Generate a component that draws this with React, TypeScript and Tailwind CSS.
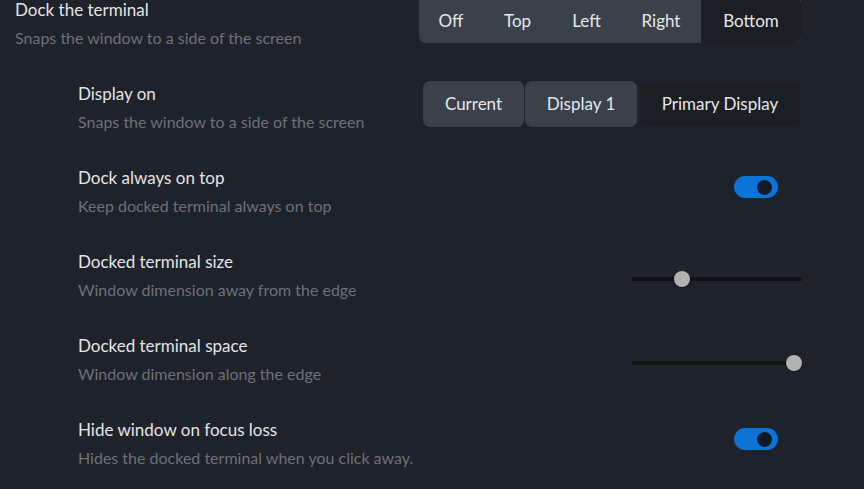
import React from "react"

const font = { fontFamily: "Lato, 'Noto Sans', sans-serif" }

function RowText({ title, desc }: { title: string; desc: string }) {
  return (
    <div className="flex flex-col">
      <div className="text-[17px] leading-6 text-[#e3e4e6]">{title}</div>
      <div className="mt-1 text-[16px] leading-6 text-[#6c7179]">{desc}</div>
    </div>
  )
}

function Toggle() {
  return (
    <div className="flex h-[22px] w-[44px] items-center justify-end rounded-full bg-[#0b74d6] pr-[6px]">
      <div className="h-[15px] w-[15px] rounded-full bg-[#0f1a26]" />
    </div>
  )
}

function Slider({ value }: { value: number }) {
  return (
    <div className="relative h-4 w-[170px]">
      <div className="absolute left-0 right-0 top-[6px] h-[4px] bg-[#131313]" />
      <div
        className="absolute top-0 h-4 w-4 rounded-full bg-[#b2b2b2] shadow-[0_1px_2px_rgba(0,0,0,0.5)]"
        style={{ left: `calc(${value}% - ${(value / 100) * 16}px)` }}
      />
    </div>
  )
}

export default function App() {
  const dock = [
    { label: "Off", w: "w-[64px]" },
    { label: "Top", w: "w-[69px]" },
    { label: "Left", w: "w-[69px]" },
    { label: "Right", w: "w-[80px]" },
  ]

  return (
    <div className="h-[489px] w-[864px] overflow-hidden bg-[#1e222a]" style={font}>
      <div className="-mt-[2px] flex flex-col">
        {/* Dock the terminal */}
        <div className="flex h-[84px] items-start justify-between pl-[15px] pr-[63px]">
          <RowText title="Dock the terminal" desc="Snaps the window to a side of the screen" />
          <div className="-mt-[1px] flex h-[46px] overflow-hidden rounded-b-[7px] bg-[#3a414a]">
            {dock.map((d) => (
              <div key={d.label} className={`${d.w} flex items-center justify-center pt-[1px] text-[17px] text-[#e6e7e9]`}>
                {d.label}
              </div>
            ))}
            <div className="flex w-[100px] items-center justify-center rounded-r-[7px] bg-[#1b1e22] pt-[1px] text-[17px] text-[#e6e7e9]">
              Bottom
            </div>
          </div>
        </div>

        {/* Display on */}
        <div className="flex h-[84px] items-start justify-between pl-[78px] pr-[64px]">
          <RowText title="Display on" desc="Snaps the window to a side of the screen" />
          <div className="-mt-[1px] flex h-[46px] items-center gap-px">
            <div className="flex h-[46px] w-[101px] items-center justify-center rounded-[7px] bg-[#3a414a] text-[17px] text-[#e6e7e9]">
              Current
            </div>
            <div className="flex h-[46px] w-[112px] items-center justify-center rounded-[7px] bg-[#3a414a] text-[17px] text-[#e6e7e9]">
              Display 1
            </div>
            <div className="ml-[2px] flex h-[43px] w-[160px] items-center justify-center rounded-[6px] bg-[#1b1e22] text-[17px] text-[#e6e7e9]">
              Primary Display
            </div>
          </div>
        </div>

        {/* Dock always on top */}
        <div className="flex h-[84px] items-start justify-between pl-[78px] pr-[86px]">
          <RowText title="Dock always on top" desc="Keep docked terminal always on top" />
          <div className="mt-[10px]">
            <Toggle />
          </div>
        </div>

        {/* Docked terminal size */}
        <div className="flex h-[84px] items-start justify-between pl-[78px] pr-[62px]">
          <RowText title="Docked terminal size" desc="Window dimension away from the edge" />
          <div className="mt-[21px]">
            <Slider value={27} />
          </div>
        </div>

        {/* Docked terminal space */}
        <div className="flex h-[84px] items-start justify-between pl-[78px] pr-[62px]">
          <RowText title="Docked terminal space" desc="Window dimension along the edge" />
          <div className="mt-[21px]">
            <Slider value={100} />
          </div>
        </div>

        {/* Hide window on focus loss */}
        <div className="flex h-[84px] items-start justify-between pl-[78px] pr-[86px]">
          <RowText title="Hide window on focus loss" desc="Hides the docked terminal when you click away." />
          <div className="mt-[10px]">
            <Toggle />
          </div>
        </div>
      </div>
    </div>
  )
}
